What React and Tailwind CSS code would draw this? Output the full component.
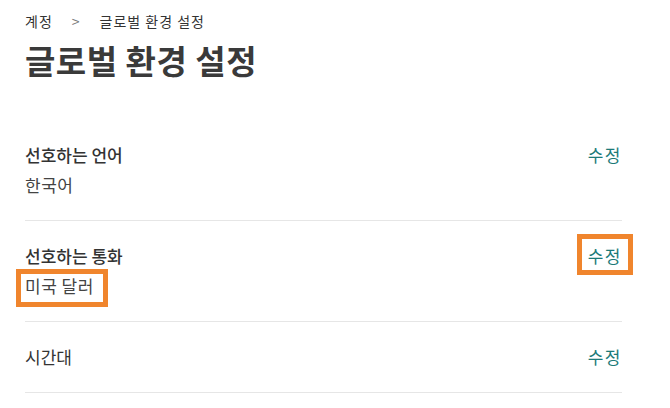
const FONT = { fontFamily: '"Noto Sans CJK KR", "Noto Sans", sans-serif' }

const ROWS = [
  { label: '선호하는 언어', value: '한국어' },
  { label: '선호하는 통화', value: '미국 달러', mark: true },
  { label: '시간대' },
]

function Highlight({ className, children }) {
  return (
    <span className="relative inline-block">
      {children}
      <span className={`pointer-events-none absolute border-[5px] border-[#f0852d] ${className}`} />
    </span>
  )
}

export default function App() {
  return (
    <div className="w-[670px] h-[408px] bg-white overflow-hidden" style={FONT}>
      <div className="pl-[25px] pr-[48px] pt-[12px]">
        <nav className="flex items-center text-[14px] leading-[18px] tracking-[1px] text-[#333]">
          <span>계정</span>
          <span className="mx-[19px] text-[#777]">&gt;</span>
          <span>글로벌 환경 설정</span>
        </nav>
        <h1 className="mt-[10px] text-[33px] leading-[40px] font-bold text-[#3a3a3a] tracking-[0.5px]">
          글로벌 환경 설정
        </h1>

        <div className="mt-[40px]">
          {ROWS.map((r, i) => (
            <div key={i} className="flex items-start justify-between py-[24px] border-b border-[#e6e6e6]">
              <div>
                <p className={`text-[17px] leading-[22px] text-[#333] ${r.value ? 'font-medium' : ''}`}>{r.label}</p>
                {r.value && (
                  <p className="mt-[8px] text-[17px] leading-[22px] tracking-[0.5px] text-[#444]">
                    {r.mark ? (
                      <Highlight className="-left-[9px] -top-[6px] w-[92px] h-[38px]">{r.value}</Highlight>
                    ) : r.value}
                  </p>
                )}
              </div>
              <p className="text-[17px] leading-[22px] tracking-[1.5px] text-[#1c7a78]">
                {r.mark ? (
                  <Highlight className="-right-[11px] -top-[11px] w-[56px] h-[41px]">수정</Highlight>
                ) : '수정'}
              </p>
            </div>
          ))}
        </div>
      </div>
    </div>
  )
}
